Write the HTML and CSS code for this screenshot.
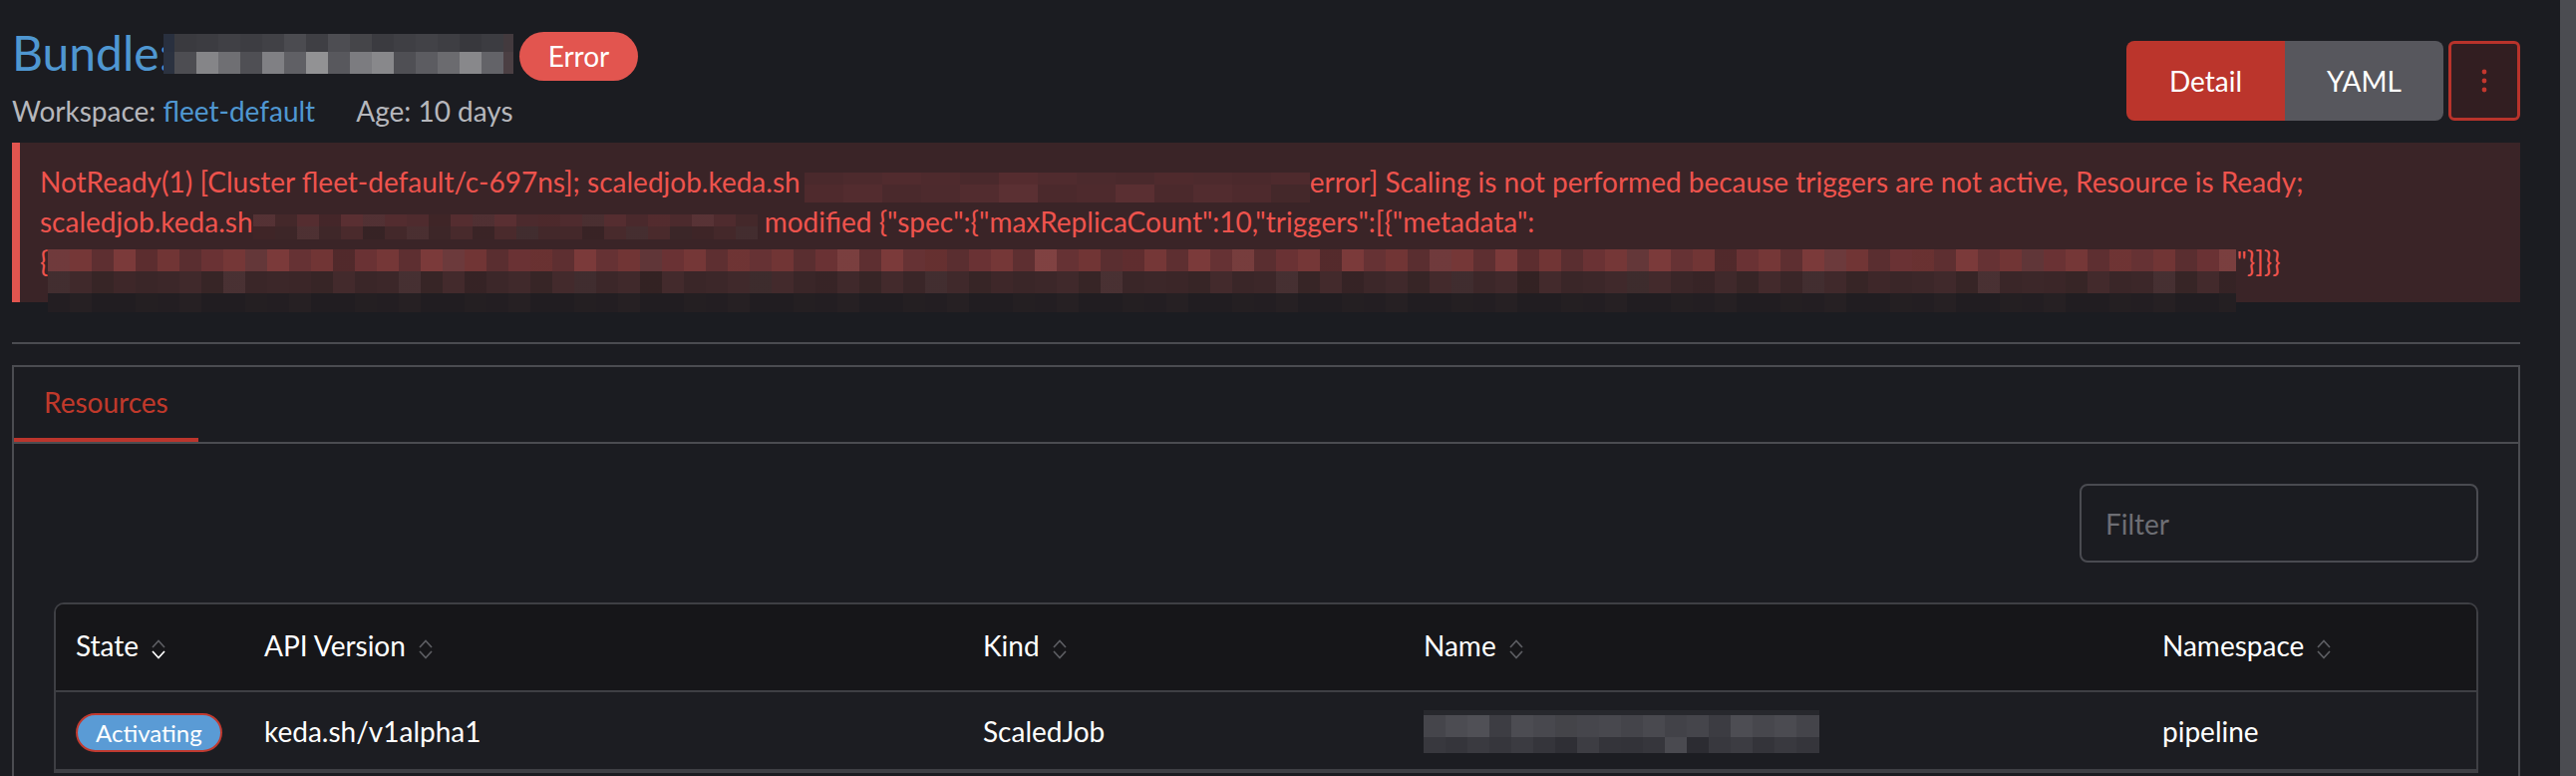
FILE: index.html
```html
<!DOCTYPE html>
<html lang="en">
<head>
<meta charset="utf-8">
<title>Bundle</title>
<link rel="stylesheet" href="styles.css">
</head>
<body>
<div class="page">
  <header class="masthead">
    <div class="title-block">
      <h1 class="title"><span class="title-text">Bundle:</span><span class="redact redact-title"><span class="r r-t1"></span><span class="r r-t2"></span></span><span class="badge-error">Error</span></h1>
      <div class="meta">
        <span>Workspace: <a href="#">fleet-default</a></span>
        <span>Age: 10 days</span>
      </div>
    </div>
    <div class="actions">
      <div class="btn-group">
        <span class="btn btn-detail">Detail</span>
        <span class="btn btn-yaml">YAML</span>
      </div>
      <span class="btn-more">
        <svg width="10" height="24" viewBox="0 0 10 24"><circle cx="5" cy="3" r="2.4" fill="#c4372e"/><circle cx="5" cy="12" r="2.4" fill="#c4372e"/><circle cx="5" cy="21" r="2.4" fill="#c4372e"/></svg>
      </span>
    </div>
  </header>

  <div class="banner">NotReady(1) [Cluster fleet-default/c-697ns]; scaledjob.keda.sh <span class="redact redact-l1"><span class="r r-l1a"></span><span class="r r-l1b"></span></span>error] Scaling is not performed because triggers are not active, Resource is Ready;<br>scaledjob.keda.sh<span class="redact redact-l2"><span class="r r-l2a"></span><span class="r r-l2b"></span></span> modified {"spec":{"maxReplicaCount":10,"triggers":[{"metadata":<br>{<span class="redact redact-l3"><span class="r r-l3a"></span><span class="r r-l3b"></span><span class="r r-l3c"></span></span>"}]}}</div>

  <div class="divider"></div>

  <section class="tabs">
    <div class="tab-list">
      <span class="tab">Resources</span>
    </div>
    <div class="tab-panel">
      <div class="filter-row">
        <input class="filter" type="text" placeholder="Filter">
      </div>
      <div class="table-wrap">
        <table class="grid">
          <colgroup>
            <col class="c-state"><col class="c-api"><col class="c-kind"><col class="c-name"><col>
          </colgroup>
          <thead>
            <tr>
              <th>State<svg class="sort" width="16" height="24" viewBox="0 0 16 24"><path d="M2 10 L8 3.5 L14 10" fill="none" stroke="#5c5d62" stroke-width="1.7"/><path d="M2 14 L8 20.5 L14 14" fill="none" stroke="#ffffff" stroke-width="1.7"/></svg></th>
              <th>API Version<svg class="sort" width="16" height="24" viewBox="0 0 16 24"><path d="M2 10 L8 3.5 L14 10" fill="none" stroke="#5c5d62" stroke-width="1.7"/><path d="M2 14 L8 20.5 L14 14" fill="none" stroke="#5c5d62" stroke-width="1.7"/></svg></th>
              <th>Kind<svg class="sort" width="16" height="24" viewBox="0 0 16 24"><path d="M2 10 L8 3.5 L14 10" fill="none" stroke="#5c5d62" stroke-width="1.7"/><path d="M2 14 L8 20.5 L14 14" fill="none" stroke="#5c5d62" stroke-width="1.7"/></svg></th>
              <th>Name<svg class="sort" width="16" height="24" viewBox="0 0 16 24"><path d="M2 10 L8 3.5 L14 10" fill="none" stroke="#5c5d62" stroke-width="1.7"/><path d="M2 14 L8 20.5 L14 14" fill="none" stroke="#5c5d62" stroke-width="1.7"/></svg></th>
              <th>Namespace<svg class="sort" width="16" height="24" viewBox="0 0 16 24"><path d="M2 10 L8 3.5 L14 10" fill="none" stroke="#5c5d62" stroke-width="1.7"/><path d="M2 14 L8 20.5 L14 14" fill="none" stroke="#5c5d62" stroke-width="1.7"/></svg></th>
            </tr>
          </thead>
          <tbody>
            <tr>
              <td><span class="state-badge">Activating</span></td>
              <td>keda.sh/v1alpha1</td>
              <td>ScaledJob</td>
              <td><span class="redact redact-name"><span class="r r-n0"></span><span class="r r-n1"></span><span class="r r-n2"></span></span></td>
              <td>pipeline</td>
            </tr>
          </tbody>
        </table>
      </div>
    </div>
  </section>
</div>
<div class="scrollbar"></div>
</body>
</html>
```

FILE: styles.css
```css
* { box-sizing: border-box; }

html, body {
  margin: 0;
  height: 100%;
}

body {
  background: #1b1c21;
  font-family: Lato, "Noto Sans", sans-serif;
  font-size: 28px;
  line-height: 40px;
  color: #ffffff;
  display: flex;
  overflow: hidden;
}

.page {
  flex: 1;
  min-width: 0;
  height: 100%;
  overflow: hidden;
  padding: 25px 40px 0 12px;
}

.scrollbar {
  flex: none;
  width: 16px;
  background: #4b4c51;
}

/* masthead */
.masthead {
  display: flex;
  justify-content: space-between;
  align-items: flex-start;
  margin-bottom: 12px;
}

.title {
  display: flex;
  align-items: flex-start;
  margin: 0 0 10px;
  font-size: 48px;
  line-height: 56px;
  font-weight: 400;
  color: #4f97d1;
}

.meta {
  display: flex;
  gap: 41px;
  color: #b6b7bc;
}

.meta a {
  color: #4f97d1;
  text-decoration: none;
}

.badge-error {
  margin: 7px 0 0 6px;
  height: 49px;
  line-height: 49px;
  padding: 0 29px;
  border-radius: 25px;
  background: #e2554f;
  color: #ffffff;
  font-size: 28px;
}

.actions {
  display: flex;
  gap: 5px;
  margin-top: 16px;
}

.btn-group {
  display: flex;
  border-radius: 8px;
  overflow: hidden;
}

.btn {
  width: 159px;
  height: 80px;
  display: flex;
  align-items: center;
  justify-content: center;
  color: #ffffff;
  font-size: 28px;
}

.btn-detail { background: #bb352c; }
.btn-yaml { background: #57575d; }

.btn-more {
  width: 72px;
  height: 80px;
  border: 3px solid #b9332b;
  border-radius: 6px;
  background: #321e21;
  display: flex;
  align-items: center;
  justify-content: center;
}

/* redaction mosaics */
.redact {
  display: inline-flex;
  flex-direction: column;
  vertical-align: top;
}

.r { display: block; width: 100%; }

.redact-title {
  width: 351px;
  margin: 9px 0 0 -8px;
}

.r-t1 {
  height: 18px;
  background: linear-gradient(90deg, #29303f 0 11px, #3a3a3f 11px 33px, #3c3c41 33px 55px, #404045 55px 77px, #3d3d42 77px 99px, #414146 99px 121px, #4b4b50 121px 143px, #3f3f44 143px 165px, #4d4d52 165px 187px, #454549 187px 209px, #3b3b40 209px 231px, #3f3f44 231px 253px, #424247 253px 275px, #3e3e43 275px 297px, #38383d 297px 319px, #3c3c41 319px 341px, #433a3e 341px 351px);
}

.r-t2 {
  height: 22px;
  background: linear-gradient(90deg, #2b3240 0 11px, #4d4d52 11px 33px, #858588 33px 55px, #6f6f73 55px 77px, #4f4f54 77px 99px, #808084 99px 121px, #606065 121px 143px, #929294 143px 165px, #58585d 165px 187px, #7c7c80 187px 209px, #88888b 209px 231px, #4f4f54 231px 253px, #5c5c61 253px 275px, #6b6b6f 275px 297px, #88888b 297px 319px, #636368 319px 341px, #4b3f43 341px 351px);
}

.redact-l1 {
  width: 507px;
  margin: 11px 0 -1px -3px;
}

.r-l1a {
  height: 12px;
  background: linear-gradient(90deg, #4a292c 0 39px, #4d2a2d 39px 78px, #512b2e 78px 117px, #4e2a2d 117px 156px, #4a292c 156px 195px, #552c2f 195px 234px, #502b2e 234px 273px, #4c2a2d 273px 312px, #4a292c 312px 351px, #4f2a2d 351px 390px, #4d2a2d 390px 429px, #4b292c 429px 468px, #4e2a2d 468px 507px);
}

.r-l1b {
  height: 18px;
  background: linear-gradient(90deg, #4f2a2d 0 39px, #532c2f 39px 78px, #4a292c 78px 117px, #4d2a2d 117px 156px, #522c2f 156px 195px, #5b3033 195px 234px, #4b292c 234px 273px, #4e2a2d 273px 312px, #5a2f32 312px 351px, #4b292c 351px 390px, #522c2f 390px 429px, #4e2a2d 429px 468px, #44282a 468px 507px);
}

.redact-l2 {
  width: 506px;
  margin: 13px 0 2px;
}

.r-l2a {
  height: 12px;
  background:
    repeating-linear-gradient(90deg, rgba(255,255,255,0.03) 0 22px, transparent 22px 66px, rgba(0,0,0,0.08) 66px 88px, transparent 88px 110px),
    repeating-linear-gradient(90deg, #4f2b2e 0 22px, #44282a 22px 44px, #552d30 44px 66px, #4a292c 66px 88px, #5a2f32 88px 110px, #4c2a2d 110px 132px, #532c2f 132px 154px);
}

.r-l2b {
  height: 13px;
  background:
    repeating-linear-gradient(90deg, rgba(0,0,0,0.08) 0 22px, transparent 22px 44px, rgba(255,255,255,0.03) 44px 66px, transparent 66px 110px),
    repeating-linear-gradient(90deg, #44282a 0 22px, #3d2628 22px 44px, #482a2c 44px 66px, #3f2729 66px 88px, #4a2a2c 88px 110px, #3b2628 110px 132px, #43282a 132px 154px);
}

.redact-l3 {
  width: 2195px;
  margin: 8px 0 -31px;
}

.r-l3a {
  height: 22px;
  background:
    repeating-linear-gradient(90deg, rgba(255,255,255,0.04) 0 22px, transparent 22px 88px, rgba(0,0,0,0.1) 88px 110px, transparent 110px 198px),
    repeating-linear-gradient(90deg, #6a3234 0 22px, #753737 22px 44px, #5e2f31 44px 66px, #7b3a3a 66px 88px, #663234 88px 110px, #713535 110px 132px, #5a2e30 132px 154px);
}

.r-l3b {
  height: 22px;
  background:
    repeating-linear-gradient(90deg, rgba(255,255,255,0.03) 0 22px, transparent 22px 66px, rgba(0,0,0,0.08) 66px 88px, transparent 88px 176px),
    repeating-linear-gradient(90deg, #3c2729 0 22px, #40292b 22px 44px, #372526 44px 66px, #432a2c 66px 88px, #3a2628 88px 110px);
}

.r-l3c {
  height: 19px;
  background: repeating-linear-gradient(90deg, #231e22 0 22px, #262023 22px 44px, #211d21 44px 88px, #241f22 88px 110px);
}

.redact-name {
  width: 397px;
  vertical-align: middle;
}

.r-n0 { height: 5px; background: #27282d; }

.r-n1 {
  height: 22px;
  background: linear-gradient(90deg, #45454b 0 22px, #4c4c52 22px 44px, #505056 44px 66px, #3d3d43 66px 88px, #4c4c52 88px 110px, #48484e 110px 132px, #444449 132px 154px, #46464c 154px 176px, #48484e 176px 198px, #44444a 198px 220px, #49494f 220px 242px, #424248 242px 264px, #45454b 264px 286px, #3c3c42 286px 308px, #4d4d53 308px 330px, #47474d 330px 352px, #4b4b51 352px 374px, #44444a 374px 397px);
}

.r-n2 {
  height: 16px;
  background: linear-gradient(90deg, #38383e 0 22px, #35353b 22px 44px, #3a3a40 44px 66px, #36363c 66px 88px, #3b3b41 88px 110px, #35353b 110px 132px, #2f2f35 132px 154px, #3d3d43 154px 176px, #34343a 176px 198px, #333339 198px 220px, #36363c 220px 242px, #4a4a50 242px 264px, #2c2c32 264px 286px, #38383e 286px 308px, #3c3c42 308px 330px, #34343a 330px 352px, #39393f 352px 374px, #35353b 374px 397px);
}

/* error banner */
.banner {
  border-left: 8px solid #e2554f;
  background: #3a2427;
  padding: 19px 20px 21px;
  color: #ee534d;
  white-space: nowrap;
}

.divider {
  height: 2px;
  background: #4b4c51;
  margin: 40px 0 21px;
}

/* tabs */
.tabs {
  border: 2px solid #4b4c51;
}

.tab-list {
  display: flex;
  border-bottom: 2px solid #4b4c51;
}

.tab {
  padding: 15px 30px 16px;
  border-bottom: 4px solid #bb352c;
  color: #c0392b;
}

.tab-panel {
  padding: 40px 40px 40px;
}

.filter-row {
  display: flex;
  justify-content: flex-end;
  margin-bottom: 40px;
}

.filter {
  width: 400px;
  height: 79px;
  border: 2px solid #4a4b51;
  border-radius: 8px;
  padding: 0 24px;
  background: transparent;
  color: #ffffff;
  font-family: Lato, "Noto Sans", sans-serif;
  font-size: 28px;
  outline: none;
}

.filter::placeholder { color: #6d6e74; }

/* table */
.table-wrap {
  border: 2px solid #3e3f44;
  border-radius: 10px 10px 0 0;
  overflow: hidden;
}

.grid {
  width: 100%;
  border-collapse: separate;
  border-spacing: 0;
  table-layout: fixed;
}

.c-state { width: 189px; }
.c-api { width: 721px; }
.c-kind { width: 442px; }
.c-name { width: 741px; }

.grid th {
  background: #161619;
  text-align: left;
  font-weight: 400;
  padding: 21px 0 25px 20px;
  border-bottom: 2px solid #3e3f44;
  white-space: nowrap;
}

.grid td {
  background: #1c1d22;
  padding: 16px 0 16px 20px;
  border-bottom: 2px solid #3e3f44;
  white-space: nowrap;
}

.sort {
  margin-left: 12px;
  vertical-align: middle;
}

.state-badge {
  display: inline-block;
  height: 39px;
  line-height: 35px;
  padding: 0 18px;
  border: 2px solid #c03a30;
  border-radius: 20px;
  background: #5a9bd5;
  color: #ffffff;
  font-size: 24px;
  vertical-align: middle;
}
```
